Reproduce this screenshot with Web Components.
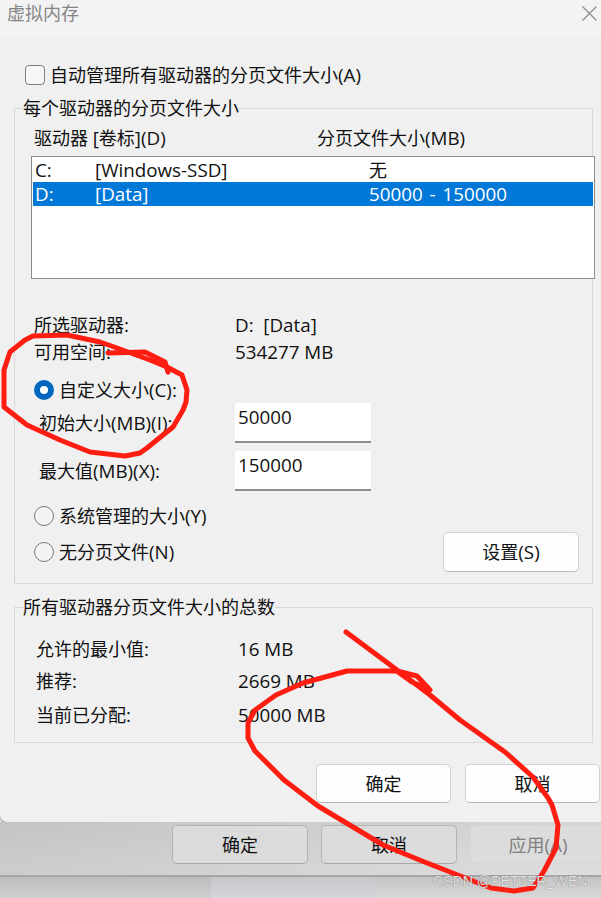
<!DOCTYPE html>
<html lang="zh-CN">
<head>
<meta charset="utf-8">
<title>虚拟内存</title>
<style>
  html, body { margin: 0; background: #f0f0f0; }
  body {
    width: 601px; height: 898px; overflow: hidden; position: relative;
    font: 18px/24px "Open Sans", "Noto Sans CJK SC", sans-serif;
    color: #111;
  }
  /* latin runs sit a bit larger than the CJK ones, like YaHei UI + Segoe */
  .l { font-size: 18.8px; }
  .gaps { word-spacing: 2px; }
</style>
</head>
<body>

<vm-dialog>
  <vm-titlebar>虚拟内存</vm-titlebar>

  <vm-check>自动管理所有驱动器的分页文件大小<span class="l">(A)</span></vm-check>

  <vm-group height="489">
    <span slot="legend">每个驱动器的分页文件大小</span>
    <vm-drive-head>
      <span>驱动器 <span class="l">[</span>卷标<span class="l">](D)</span></span>
      <span>分页文件大小<span class="l">(MB)</span></span>
    </vm-drive-head>
    <vm-drive-list>
      <vm-drive-row><span class="l">C:</span><span class="l">[Windows-SSD]</span><span>无</span></vm-drive-row>
      <vm-drive-row selected><span class="l">D:</span><span class="l">[Data]</span><span class="l gaps">50000 - 150000</span></vm-drive-row>
    </vm-drive-list>
    <vm-info top="34"><span>所选驱动器<span class="l">:</span></span><span class="l">D:&nbsp; [Data]</span></vm-info>
    <vm-info top="3"><span>可用空间<span class="l">:</span></span><span class="l">534277 MB</span></vm-info>
    <vm-radio checked top="16">自定义大小<span class="l">(C):</span></vm-radio>
    <vm-field top="3"><span>初始大小<span class="l">(MB)(I):</span></span><span slot="value" class="l">50000</span></vm-field>
    <vm-field top="8"><span>最大值<span class="l">(MB)(X):</span></span><span slot="value" class="l">150000</span></vm-field>
    <vm-radio top="15">系统管理的大小<span class="l">(Y)</span></vm-radio>
    <vm-radio-row>
      <vm-radio>无分页文件<span class="l">(N)</span></vm-radio>
      <vm-button slot="action">设置<span class="l">(S)</span></vm-button>
    </vm-radio-row>
  </vm-group>

  <vm-group height="149" tight>
    <span slot="legend">所有驱动器分页文件大小的总数</span>
    <vm-info wide top="17"><span>允许的最小值<span class="l">:</span></span><span class="l">16 MB</span></vm-info>
    <vm-info wide top="8"><span>推荐<span class="l">:</span></span><span class="l">2669 MB</span></vm-info>
    <vm-info wide top="10"><span>当前已分配<span class="l">:</span></span><span class="l">50000 MB</span></vm-info>
  </vm-group>

  <vm-actions>
    <vm-button>确定</vm-button>
    <vm-button>取消</vm-button>
  </vm-actions>
</vm-dialog>

<vm-backdrop>
  <vm-button ghost>确定</vm-button>
  <vm-button ghost>取消</vm-button>
  <vm-button ghost disabled>应用<span class="l">(A)</span></vm-button>
</vm-backdrop>

<vm-scribble></vm-scribble>
<vm-watermark>CSDN @PETTER_WEN</vm-watermark>

<script>
// small base class: every element just stamps its own styles + markup
class Part extends HTMLElement {
  static css = '';
  static html = '<slot></slot>';
  constructor() {
    super();
    const shadow = this.attachShadow({ mode: 'open' });
    shadow.innerHTML = `<style>${this.constructor.css}</style>${this.constructor.html}`;
  }
  connectedCallback() {
    if (this.hasAttribute('top')) this.style.marginTop = this.getAttribute('top') + 'px';
  }
}

customElements.define('vm-dialog', class extends Part {
  static css = `
    :host {
      display: block; height: 822px; box-sizing: border-box;
      background: #f0f0f0;
      border-bottom-left-radius: 7px;
      box-shadow: 0 2px 1px #a6a6a6;
      position: relative;
    }`;
});

customElements.define('vm-titlebar', class extends Part {
  static css = `
    :host {
      display: flex; justify-content: space-between; align-items: flex-start;
      height: 36px; background: #f3f3f3; color: #858585;
      padding-left: 7px; line-height: 26px;
    }
    svg { margin: 6px 4px 0 0; }`;
  static html = `
    <span><slot></slot></span>
    <svg width="15" height="15" viewBox="0 0 15 15" fill="none" stroke="#8e8e8e" stroke-width="1.3">
      <path d="M0.5 0.5L14.5 14.5M14.5 0.5L0.5 14.5"/>
    </svg>`;
});

customElements.define('vm-check', class extends Part {
  static css = `
    :host { display: flex; align-items: center; gap: 5px; height: 20px; margin: 29px 0 0 25px; }
    i { width: 20px; height: 20px; box-sizing: border-box; border: 1px solid #7f7f7f; border-radius: 4px; background: #f6f6f6; }`;
  static html = `<i></i><span><slot></slot></span>`;
});

customElements.define('vm-group', class extends Part {
  static css = `
    :host { display: block; margin: 10px 8px 0 14px; }
    fieldset {
      margin: 0; padding: 0 13px 0 19px; box-sizing: border-box; height: 100%;
      border: 1px solid #d8d8d8;
    }
    legend { padding: 0; margin-left: -11px; line-height: 26px; height: 26px; }
    :host([tight]) fieldset { padding: 0 13px 0 21px; }
    :host([tight]) legend { margin-left: -13px; }`;
  static html = `<fieldset><legend><slot name="legend"></slot></legend><slot></slot></fieldset>`;
  connectedCallback() {
    super.connectedCallback();
    this.style.height = this.getAttribute('height') + 'px';
  }
});

customElements.define('vm-drive-head', class extends Part {
  static css = `
    :host { display: grid; grid-template-columns: 283px 1fr; margin-top: 5px; height: 24px; }`;
});

customElements.define('vm-drive-list', class extends Part {
  static css = `
    :host {
      display: block; height: 123px; box-sizing: border-box;
      margin: 6px -16px 0 -3px; padding: 1px;
      background: #fff; border: 1px solid #8c8c8c;
      position: relative;
    }`;
});

customElements.define('vm-drive-row', class extends Part {
  static css = `
    :host {
      display: grid; grid-template-columns: 60px 274px 1fr;
      height: 24px; padding-left: 2px;
    }
    :host([selected]) { background: #0078d7; color: #fff; }`;
});

customElements.define('vm-info', class extends Part {
  static css = `
    :host { display: grid; grid-template-columns: 201px 1fr; height: 24px; }
    :host([wide]) { grid-template-columns: 202px 1fr; }`;
});

customElements.define('vm-radio', class extends Part {
  static css = `
    :host { display: flex; align-items: center; gap: 5px; height: 20px; }
    i { width: 20px; height: 20px; box-sizing: border-box; border-radius: 50%; border: 1px solid #7a7a7a; background: #f3f3f3; }
    :host([checked]) i { border: 6px solid #0067c0; background: #fff; }`;
  static html = `<i></i><span><slot></slot></span>`;
});

customElements.define('vm-radio-row', class extends Part {
  static css = `
    :host { display: flex; align-items: center; justify-content: space-between; height: 40px; margin-top: 6px; }
    ::slotted(vm-button) { width: 136px; height: 40px; }`;
  static html = `<slot></slot><slot name="action"></slot>`;
});

customElements.define('vm-field', class extends Part {
  static css = `
    :host { display: grid; grid-template-columns: 201px 136px; align-items: center; height: 40px; }
    .name { padding-left: 5px; }
    .box {
      height: 40px; box-sizing: border-box; padding: 2px 0 0 3px;
      background: #fff; border-bottom: 2px solid #8e8e8e;
    }`;
  static html = `<span class="name"><slot></slot></span><div class="box"><slot name="value"></slot></div>`;
});

customElements.define('vm-button', class extends Part {
  static css = `
    :host {
      display: flex; align-items: center; justify-content: center; flex: none;
      box-sizing: border-box; width: 135px; height: 39px;
      background: #fdfdfd; border: 1px solid #d2d2d2; border-bottom-color: #b8b8b8; border-radius: 5px;
    }
    :host([ghost]) { width: 136px; background: #dbdbdb; border-color: #b4b4b4; border-bottom-color: #a8a8a8; }
    :host([disabled]) { background: #dcdcdc; border-color: #d6d6d6; color: #7f7f7f; }`;
});

customElements.define('vm-actions', class extends Part {
  static css = `
    :host { display: flex; justify-content: flex-end; gap: 14px; margin: 21px 1px 0 0; }`;
});

customElements.define('vm-backdrop', class extends Part {
  static css = `
    :host { display: block; height: 76px; position: relative; }
    .bar {
      display: flex; gap: 13px; height: 55px; box-sizing: border-box;
      padding: 3px 0 0 172px;
      background: linear-gradient(170deg, #c4c4c4, #dedede);
      border-bottom: 2px solid #a6a6a6;
    }
    .foot { display: grid; grid-template-columns: 211px 165px 1fr; height: 21px; }
    .foot i:nth-child(1) { background: linear-gradient(#bdbdbd, #cfcfcf); }
    .foot i:nth-child(2) { background: linear-gradient(#c6c6cb, #d6d6da); }
    .foot i:nth-child(3) { background: linear-gradient(#c4c4c4, #d8d8d8); }`;
  static html = `<div class="bar"><slot></slot></div><div class="foot"><i></i><i></i><i></i></div>`;
});

customElements.define('vm-scribble', class extends Part {
  static css = `
    :host { position: absolute; left: 0; top: 0; pointer-events: none; }
    svg { display: block; }
    path { fill: none; stroke: #ff1d12; stroke-width: 5; stroke-linejoin: round; stroke-linecap: round; }`;
  static html = `
    <svg width="601" height="898" viewBox="0 0 601 898">
      <path d="M108 353L145 352L165 362L168 372"/>
      <path d="M100 342L117 348L150 360L167 367L182 375L187 390L186 402L183 410L173 427L163 435L147 448L140 453L125 456L90 452L60 440L27 425L4 407L4 370L10 352L25 340L33 336L67 335L100 342"/>
      <path d="M346 632L397 670L430 695L460 720L505 752L533 777L548 798L552 805L558 825L556 848L544 871L533 888L514 891L491 888L422 861L383 845L318 806L284 780L255 751L248 738L248 723L255 710L276 695L303 683L347 671L397 671L417 676L430 690L412 682L398 672"/>
    </svg>`;
});

customElements.define('vm-watermark', class extends Part {
  static css = `
    :host {
      position: absolute; left: 433px; top: 871px; line-height: 20px; white-space: nowrap;
      font-family: "Liberation Sans", sans-serif; font-size: 14.1px;
      color: #e2e2e2; text-shadow: 0 0 1px #555;
    }`;
});
</script>
</body>
</html>
